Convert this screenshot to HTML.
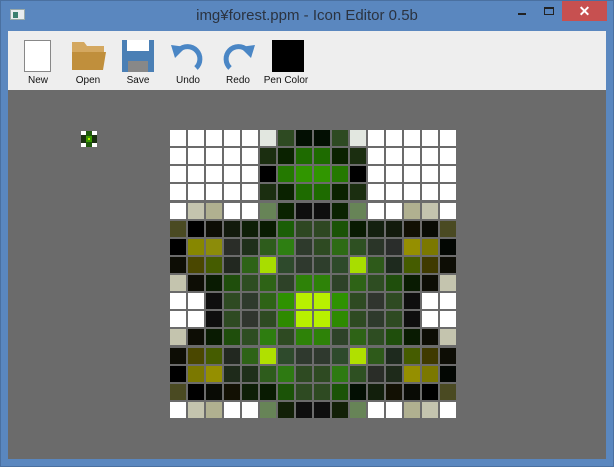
<!DOCTYPE html>
<html><head><meta charset="utf-8"><style>
*{margin:0;padding:0;box-sizing:border-box}
body{width:614px;height:467px;background:#5a87bf;position:relative;overflow:hidden;font-family:"Liberation Sans","Noto Sans CJK JP",sans-serif}
.frame{position:absolute;left:0;top:0;width:614px;height:467px;border:1px solid #4a70a0}
.title{position:absolute;left:0;right:0;top:7px;text-align:center;font-size:15px;color:#2b3340}
.close{position:absolute;left:562px;top:1px;width:45px;height:20px;background:#c75050;color:#fff;text-align:center;font-size:14px;font-weight:bold;line-height:20px}
.tb{position:absolute;left:8px;top:31px;width:598px;height:59px;background:#eeeeee}
.cv{position:absolute;left:8px;top:90px;width:598px;height:369px;background:#6b6b6b}
.lbl{position:absolute;top:75px;font-size:10px;color:#111;text-align:center;width:60px}
.grid{position:absolute;left:169px;top:129px;width:290px;height:290px;display:grid;grid-template-columns:repeat(16,16px);grid-gap:2px;padding:1px}
.grid i{display:block;width:16px;height:16px}
</style></head><body>
<div class="frame"></div>
<div style="position:absolute;left:10px;top:9px;width:15px;height:11px;background:#e8ecef;border:1px solid #9aa"><div style="position:absolute;left:2px;top:2px;width:5px;height:6px;background:#3b7f70"></div></div>
<div class="title">img¥forest.ppm - Icon Editor 0.5b</div>
<div style="position:absolute;left:518px;top:13px;width:8px;height:2px;background:#222"></div>
<div style="position:absolute;left:544px;top:7px;width:10px;height:8px;border:1px solid #222;border-top-width:2px"></div>
<div class="close">✕</div>
<div class="tb"></div>
<div class="cv"></div>
<!-- toolbar icons -->
<div style="position:absolute;left:24px;top:40px;width:27px;height:32px;background:#fff;border:1px solid #888"></div>
<svg style="position:absolute;left:70px;top:40px" width="38" height="32"><path d="M2 2h12l3 4h17v6H2z" fill="#d4a860"/><path d="M2 12h34l-3 18H2z" fill="#c08f3c"/></svg>
<svg style="position:absolute;left:122px;top:40px" width="32" height="32"><rect width="32" height="32" fill="#4a7fb5"/><rect x="5" y="0" width="22" height="11" fill="#fff"/><rect x="6" y="21" width="20" height="11" fill="#888"/></svg>
<svg style="position:absolute;left:170px;top:38px" width="36" height="34"><path d="M9 12 A12 12 0 1 1 26 30" fill="none" stroke="#4a86c5" stroke-width="5"/><path d="M1 7 L16 9 L5 20 Z" fill="#4a86c5"/></svg>
<svg style="position:absolute;left:220px;top:38px" width="36" height="34"><path d="M27 12 A12 12 0 1 0 10 30" fill="none" stroke="#4a86c5" stroke-width="5"/><path d="M35 7 L20 9 L31 20 Z" fill="#4a86c5"/></svg>
<div style="position:absolute;left:272px;top:40px;width:32px;height:32px;background:#000"></div>
<div class="lbl" style="left:8px">New</div>
<div class="lbl" style="left:58px">Open</div>
<div class="lbl" style="left:108px">Save</div>
<div class="lbl" style="left:158px">Undo</div>
<div class="lbl" style="left:208px">Redo</div>
<div class="lbl" style="left:256px">Pen Color</div>
<!-- thumbnail -->
<div style="position:absolute;left:81px;top:131px;width:16px;height:16px;background:#fff"></div>
<div style="position:absolute;left:81px;top:135px;width:16px;height:8px;background:#1a3010"></div>
<div style="position:absolute;left:86px;top:131px;width:6px;height:16px;background:#1f5a0c"></div>
<div style="position:absolute;left:86px;top:136px;width:6px;height:6px;background:#3a9a00"></div>
<div style="position:absolute;left:88px;top:138px;width:2px;height:2px;background:#b8f000"></div>
<div class="grid">
<i style="background:#fff"></i><i style="background:#fff"></i><i style="background:#fff"></i><i style="background:#fff"></i><i style="background:#fff"></i><i style="background:#e2e7e0"></i><i style="background:#2e4a22"></i><i style="background:#030f03"></i><i style="background:#030f03"></i><i style="background:#2e4a22"></i><i style="background:#e2e7e0"></i><i style="background:#fff"></i><i style="background:#fff"></i><i style="background:#fff"></i><i style="background:#fff"></i><i style="background:#fff"></i>
<i style="background:#fff"></i><i style="background:#fff"></i><i style="background:#fff"></i><i style="background:#fff"></i><i style="background:#fff"></i><i style="background:#1b2e10"></i><i style="background:#0a2200"></i><i style="background:#1e6b00"></i><i style="background:#1e6b00"></i><i style="background:#0a2200"></i><i style="background:#1b2e10"></i><i style="background:#fff"></i><i style="background:#fff"></i><i style="background:#fff"></i><i style="background:#fff"></i><i style="background:#fff"></i>
<i style="background:#fff"></i><i style="background:#fff"></i><i style="background:#fff"></i><i style="background:#fff"></i><i style="background:#fff"></i><i style="background:#000"></i><i style="background:#247900"></i><i style="background:#319600"></i><i style="background:#319600"></i><i style="background:#247900"></i><i style="background:#000"></i><i style="background:#fff"></i><i style="background:#fff"></i><i style="background:#fff"></i><i style="background:#fff"></i><i style="background:#fff"></i>
<i style="background:#fff"></i><i style="background:#fff"></i><i style="background:#fff"></i><i style="background:#fff"></i><i style="background:#fff"></i><i style="background:#1b2e10"></i><i style="background:#0a2200"></i><i style="background:#1e6b00"></i><i style="background:#1e6b00"></i><i style="background:#0a2200"></i><i style="background:#1b2e10"></i><i style="background:#fff"></i><i style="background:#fff"></i><i style="background:#fff"></i><i style="background:#fff"></i><i style="background:#fff"></i>
<i style="background:#fff"></i><i style="background:#c4c4ae"></i><i style="background:#b0b090"></i><i style="background:#fff"></i><i style="background:#fff"></i><i style="background:#678457"></i><i style="background:#0a2200"></i><i style="background:#0e0e0e"></i><i style="background:#0e0e0e"></i><i style="background:#0a2200"></i><i style="background:#678457"></i><i style="background:#fff"></i><i style="background:#fff"></i><i style="background:#b0b090"></i><i style="background:#c4c4ae"></i><i style="background:#fff"></i>
<i style="background:#4a4a22"></i><i style="background:#000"></i><i style="background:#0d0d05"></i><i style="background:#121a0c"></i><i style="background:#0e1f07"></i><i style="background:#091b02"></i><i style="background:#1b5e07"></i><i style="background:#2e4722"></i><i style="background:#2e4722"></i><i style="background:#1b5307"></i><i style="background:#091b02"></i><i style="background:#142010"></i><i style="background:#121a0c"></i><i style="background:#121003"></i><i style="background:#090b05"></i><i style="background:#4a4a22"></i>
<i style="background:#000"></i><i style="background:#878700"></i><i style="background:#8c8c0a"></i><i style="background:#2a2d28"></i><i style="background:#1f301a"></i><i style="background:#2e5c1c"></i><i style="background:#2e7f12"></i><i style="background:#2e3a2c"></i><i style="background:#2e4a22"></i><i style="background:#2e6b14"></i><i style="background:#2e5022"></i><i style="background:#2a3528"></i><i style="background:#2a2d2b"></i><i style="background:#958f00"></i><i style="background:#7b7800"></i><i style="background:#030703"></i>
<i style="background:#0d0d05"></i><i style="background:#4a4700"></i><i style="background:#455c00"></i><i style="background:#222820"></i><i style="background:#2e6316"></i><i style="background:#a8dd00"></i><i style="background:#2e4a2c"></i><i style="background:#2f392e"></i><i style="background:#2e3e2c"></i><i style="background:#2e4a2a"></i><i style="background:#a8dd00"></i><i style="background:#2e5a1a"></i><i style="background:#1e2a1e"></i><i style="background:#455c00"></i><i style="background:#3f3a00"></i><i style="background:#0d0d05"></i>
<i style="background:#c4c4ae"></i><i style="background:#0d0d05"></i><i style="background:#091b02"></i><i style="background:#1f4e0c"></i><i style="background:#2e4d22"></i><i style="background:#2e6316"></i><i style="background:#2e4228"></i><i style="background:#2e8208"></i><i style="background:#2e8208"></i><i style="background:#2e4228"></i><i style="background:#2e6316"></i><i style="background:#2e4d22"></i><i style="background:#1f4e0c"></i><i style="background:#091b02"></i><i style="background:#0d0d05"></i><i style="background:#c4c4ae"></i>
<i style="background:#fff"></i><i style="background:#fff"></i><i style="background:#0e0e0e"></i><i style="background:#2e4a22"></i><i style="background:#2e3a2c"></i><i style="background:#2e6316"></i><i style="background:#2e9200"></i><i style="background:#b8f000"></i><i style="background:#b8f000"></i><i style="background:#2e9200"></i><i style="background:#2e4a22"></i><i style="background:#30352e"></i><i style="background:#2e4a22"></i><i style="background:#0e0e0e"></i><i style="background:#fff"></i><i style="background:#fff"></i>
<i style="background:#fff"></i><i style="background:#fff"></i><i style="background:#0e0e0e"></i><i style="background:#2e4a22"></i><i style="background:#30352e"></i><i style="background:#2e4a22"></i><i style="background:#2e8a00"></i><i style="background:#b8f000"></i><i style="background:#b8f000"></i><i style="background:#2e8a00"></i><i style="background:#2e4a22"></i><i style="background:#2e3a2c"></i><i style="background:#2e4a22"></i><i style="background:#0e0e0e"></i><i style="background:#fff"></i><i style="background:#fff"></i>
<i style="background:#c4c4ae"></i><i style="background:#0d0d05"></i><i style="background:#091b02"></i><i style="background:#1f4e0c"></i><i style="background:#2e4d22"></i><i style="background:#2e7d10"></i><i style="background:#2e4a22"></i><i style="background:#2e8208"></i><i style="background:#2e8208"></i><i style="background:#2e4228"></i><i style="background:#2e6316"></i><i style="background:#2e4d22"></i><i style="background:#1f4e0c"></i><i style="background:#091b02"></i><i style="background:#0d0d05"></i><i style="background:#c4c4ae"></i>
<i style="background:#0d0d05"></i><i style="background:#4a4700"></i><i style="background:#455c00"></i><i style="background:#222820"></i><i style="background:#2e6316"></i><i style="background:#b0e000"></i><i style="background:#2e4a2c"></i><i style="background:#2f392e"></i><i style="background:#2f392e"></i><i style="background:#2e4a2c"></i><i style="background:#b0e000"></i><i style="background:#2e5a1a"></i><i style="background:#1e2a1e"></i><i style="background:#455c00"></i><i style="background:#3f3a00"></i><i style="background:#0d0d05"></i>
<i style="background:#000"></i><i style="background:#7b7800"></i><i style="background:#958f00"></i><i style="background:#1e2a1a"></i><i style="background:#1f301a"></i><i style="background:#2e5c1c"></i><i style="background:#2e7a12"></i><i style="background:#2e4a22"></i><i style="background:#2e4a22"></i><i style="background:#2e7a12"></i><i style="background:#2e5022"></i><i style="background:#2a2d28"></i><i style="background:#1e2a1a"></i><i style="background:#958f00"></i><i style="background:#7b7800"></i><i style="background:#030703"></i>
<i style="background:#4a4a22"></i><i style="background:#000"></i><i style="background:#090b05"></i><i style="background:#121003"></i><i style="background:#0e1f07"></i><i style="background:#091b02"></i><i style="background:#1b5307"></i><i style="background:#2e4a22"></i><i style="background:#2e4a22"></i><i style="background:#1b5307"></i><i style="background:#030f03"></i><i style="background:#121f0c"></i><i style="background:#121003"></i><i style="background:#090b05"></i><i style="background:#000"></i><i style="background:#4a4a22"></i>
<i style="background:#fff"></i><i style="background:#c4c4ae"></i><i style="background:#b0b090"></i><i style="background:#fff"></i><i style="background:#fff"></i><i style="background:#678457"></i><i style="background:#122007"></i><i style="background:#0e0e0e"></i><i style="background:#0e0e0e"></i><i style="background:#122007"></i><i style="background:#678457"></i><i style="background:#fff"></i><i style="background:#fff"></i><i style="background:#b0b090"></i><i style="background:#c4c4ae"></i><i style="background:#fff"></i>
</div>
</body></html>
